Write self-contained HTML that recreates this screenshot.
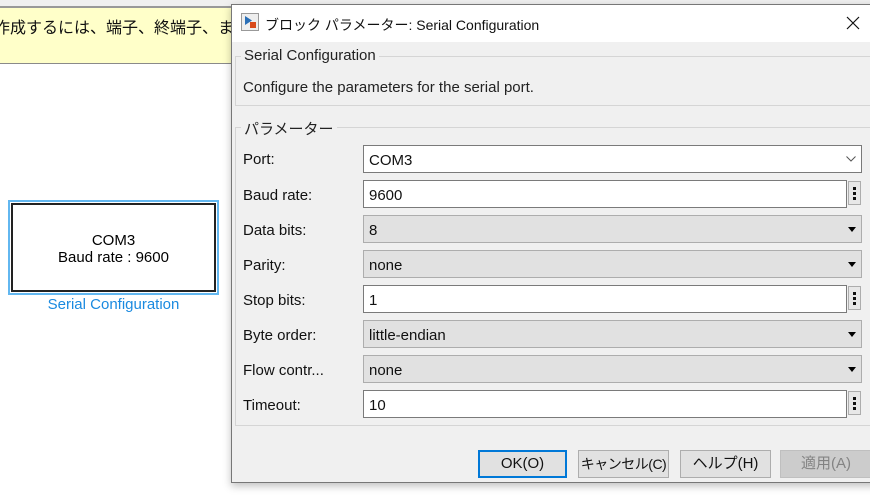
<!DOCTYPE html>
<html><head><meta charset="utf-8"><style>
*{box-sizing:border-box}
body{margin:0;width:870px;height:497px;background:#fff;position:relative;overflow:hidden;font-family:"Liberation Sans","Noto Sans CJK JP",sans-serif}
.a{position:absolute;white-space:nowrap}
.lbl{position:absolute;left:243px;font-size:15px;color:#111}
.f{position:absolute;left:363px;height:28px;font-size:15px;padding:6px 0 0 5px;color:#111}
.t{background:#fff;border:1px solid #7a7a7a;width:484px}
.d{background:#e1e1e1;border:1px solid #adadad;width:499px}
.d:after{content:"";position:absolute;right:5px;top:11px;border-left:4px solid transparent;border-right:4px solid transparent;border-top:5px solid #000}
.dots{position:absolute;left:848px;width:13px;height:24px;border:1px solid #adadad;background:#e8e8e8}
.dots i{position:absolute;left:4px;width:3px;height:3px;background:#111}
.b{position:absolute;top:450px;height:28px;background:#e1e1e1;border:1px solid #adadad;font-size:15px;text-align:center;line-height:26px;color:#111;white-space:nowrap;overflow:hidden}
</style></head><body>
<div class="a" style="left:0;top:0;width:870px;height:6px;background:#f0f0f0"></div>
<div class="a" style="left:0;top:6px;width:240px;height:2px;background:#999"></div>
<div class="a" style="left:0;top:8px;width:240px;height:56px;background:#ffffc9;border-bottom:1px solid #8a8a8a;overflow:hidden"><div style="position:absolute;left:-6px;top:6px;font-size:16px;color:#111">作成するには、端子、終端子、または</div></div>
<div class="a" style="left:8px;top:200px;width:211px;height:95px;border:2px solid #62b7f0"></div>
<div class="a" style="left:11px;top:203px;width:205px;height:89px;border:2px solid #222;background:#fff;text-align:center;font-size:15px;padding-top:27px;line-height:17px">COM3<br>Baud rate : 9600</div>
<div class="a" style="left:0;top:296px;width:227px;text-align:center;color:#1a8ae0;font-size:15px">Serial Configuration</div>

<div class="a" style="left:231px;top:4px;width:660px;height:479px;background:#f0f0f0;border:1px solid #777;box-shadow:0 3px 8px rgba(0,0,0,.25)"></div>
<div class="a" style="left:232px;top:5px;width:640px;height:37px;background:#fff"></div>
<svg class="a" style="left:241px;top:13px" width="18" height="18"><rect x=".5" y=".5" width="17" height="17" fill="#eee" stroke="#999"/><path d="M4 3 L4 12 L11 7.5Z" fill="#2a6fb6"/><rect x="9" y="9" width="6" height="6" fill="#d84a1b"/></svg>
<div class="a" style="left:265px;top:15px;font-size:14px;color:#111">ブロック パラメーター: Serial Configuration</div>
<svg class="a" style="left:846px;top:16px" width="14" height="14"><path d="M1 1L13 13M13 1L1 13" stroke="#111" stroke-width="1.2"/></svg>
<div class="a" style="left:235px;top:56px;width:640px;height:50px;border:1px solid #d5d5d5"></div>
<div class="a" style="left:241px;top:47px;background:#f0f0f0;padding:0 3px;font-size:15px;color:#222">Serial Configuration</div>
<div class="a" style="left:243px;top:79px;font-size:15px;color:#222">Configure the parameters for the serial port.</div>
<div class="a" style="left:235px;top:127px;width:640px;height:299px;border:1px solid #d5d5d5"></div>
<div class="a" style="left:241px;top:118px;background:#f0f0f0;padding:0 3px;font-size:15px;color:#222">パラメーター</div>

<div class="lbl" style="top:151px">Port:</div>
<div class="f" style="top:145px;width:499px;background:#fff;border:1px solid #7a7a7a">COM3<svg style="position:absolute;right:5px;top:10px" width="10" height="6"><path d="M0.5 0.5L5 5L9.5 0.5" stroke="#555" fill="none"/></svg></div>
<div class="lbl" style="top:187px">Baud rate:</div>
<div class="f t" style="top:180px">9600</div>
<div class="dots" style="top:181px"><i style="top:5px"></i><i style="top:10px"></i><i style="top:15px"></i></div>
<div class="lbl" style="top:222px">Data bits:</div>
<div class="f d" style="top:215px">8</div>
<div class="lbl" style="top:257px">Parity:</div>
<div class="f d" style="top:250px">none</div>
<div class="lbl" style="top:292px">Stop bits:</div>
<div class="f t" style="top:285px">1</div>
<div class="dots" style="top:286px"><i style="top:5px"></i><i style="top:10px"></i><i style="top:15px"></i></div>
<div class="lbl" style="top:327px">Byte order:</div>
<div class="f d" style="top:320px">little-endian</div>
<div class="lbl" style="top:362px">Flow contr...</div>
<div class="f d" style="top:355px">none</div>
<div class="lbl" style="top:397px">Timeout:</div>
<div class="f t" style="top:390px">10</div>
<div class="dots" style="top:391px"><i style="top:5px"></i><i style="top:10px"></i><i style="top:15px"></i></div>

<div class="b" style="left:478px;width:89px;border:2px solid #0078d7;line-height:24px">OK(O)</div>
<div class="b" style="left:578px;width:91px;letter-spacing:-0.5px;font-size:14px">キャンセル(C)</div>
<div class="b" style="left:680px;width:91px">ヘルプ(H)</div>
<div class="b" style="left:780px;width:92px;background:#cccccc;border-color:#bfbfbf;color:#838383">適用(A)</div>
</body></html>
